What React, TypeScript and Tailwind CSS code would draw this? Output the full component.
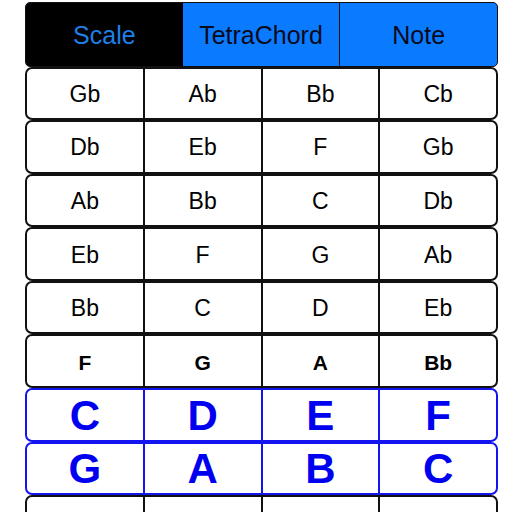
import React from "react";

const normalRows = [
  ["Gb", "Ab", "Bb", "Cb"],
  ["Db", "Eb", "F", "Gb"],
  ["Ab", "Bb", "C", "Db"],
  ["Eb", "F", "G", "Ab"],
  ["Bb", "C", "D", "Eb"],
];
const boldRow = ["F", "G", "A", "Bb"];
const blueRows = [
  ["C", "D", "E", "F"],
  ["G", "A", "B", "C"],
];

function Row({ cells, kind }: { cells: string[]; kind: "normal" | "bold" | "blue" | "empty" }) {
  const isBlue = kind === "blue";
  const rowCls = isBlue
    ? "flex h-[53.6px] shrink-0 rounded-[7px] border-2 border-[#1414f0] bg-white"
    : "flex h-[53.6px] shrink-0 rounded-[7px] border-2 border-[#111] bg-white";
  const textCls =
    kind === "blue"
      ? "text-[42px] font-bold text-[#0000f0]"
      : kind === "bold"
      ? "text-[21px] font-bold text-black"
      : "text-[23px] text-black";
  return (
    <div className={rowCls}>
      {cells.map((c, i) => (
        <div
          key={i}
          className={
            "flex flex-1 items-center justify-center pt-[2px] leading-none " +
            textCls +
            (i > 0 ? (isBlue ? " border-l-2 border-[#1414f0]" : " border-l-2 border-[#111]") : "")
          }
        >
          {c}
        </div>
      ))}
    </div>
  );
}

export default function App() {
  return (
    <div className="h-[512px] w-[512px] overflow-hidden bg-white font-['Liberation_Sans',Arial,sans-serif]">
      <div className="ml-[25px] flex w-[473px] flex-col pt-[2px]">
        <div className="flex h-[64.5px] shrink-0 overflow-hidden rounded-[5px] border-[1.5px] border-[#111] bg-[#0a7aff] text-[25px] leading-none">
          <div className="flex flex-1 items-center justify-center bg-black pt-[2px] text-[#1f7fe8]">Scale</div>
          <div className="flex flex-1 items-center justify-center pt-[2px] text-[#0a0a1a]">TetraChord</div>
          <div className="flex flex-1 items-center justify-center border-l-[1.5px] border-[#111] pt-[2px] text-[#0a0a1a]">Note</div>
        </div>
        {normalRows.map((r, i) => (
          <Row key={"n" + i} cells={r} kind="normal" />
        ))}
        <Row cells={boldRow} kind="bold" />
        {blueRows.map((r, i) => (
          <Row key={"b" + i} cells={r} kind="blue" />
        ))}
        <Row cells={["", "", "", ""]} kind="empty" />
      </div>
    </div>
  );
}
